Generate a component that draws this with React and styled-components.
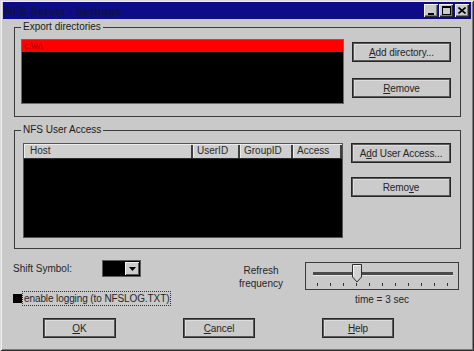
import React from "react";
import styled, { createGlobalStyle } from "styled-components";

const GlobalStyle = createGlobalStyle`
  html, body {
    margin: 0;
    padding: 0;
    background: #c9c9c9;
  }
  body {
    font-family: "Liberation Sans", Arial, sans-serif;
    font-size: 10px;
    color: #1b1b1b;
  }
`;

const Window = styled.div`
  width: 474px;
  height: 351px;
  box-sizing: border-box;
  padding: 2px 3px 0 3px;
  background: #c9c9c9;
  display: flex;
  flex-direction: column;
  box-shadow: inset 1px 1px #dcdcdc, inset -1px -1px #2e2e2e,
    inset 2px 2px #efefef, inset -2px -2px #7c7c7c;
`;

const TitleBar = styled.div`
  height: 17px;
  flex: none;
  display: flex;
  align-items: center;
  padding: 0 2px 0 2px;
  background: #0c0c86;
`;

const Title = styled.span`
  flex: 1;
  font-size: 11px;
  font-weight: bold;
  color: #121240;
  letter-spacing: 0.2px;
`;

const TitleButton = styled.div`
  width: 14px;
  height: 13px;
  box-sizing: border-box;
  margin-left: ${(p) => p.$gap || 0}px;
  background: #cacaca;
  box-shadow: inset 1px 1px #f4f4f4, inset -1px -1px #2a2a2a,
    inset -2px -2px #7c7c7c;
  display: flex;
  align-items: center;
  justify-content: center;
`;

const Body = styled.div`
  display: flex;
  flex-direction: column;
  padding: 2px 10px 0 11px;
`;

const Group = styled.fieldset`
  margin: 0;
  margin-top: ${(p) => p.$top || 0}px;
  padding: 0;
  min-width: 0;
  border: 1px solid #3b3b3b;
`;

const Legend = styled.legend`
  margin-left: 6px;
  padding: 0 2px;
  line-height: 12px;
  font-size: 10px;
`;

const GroupInner = styled.div`
  display: flex;
  align-items: flex-start;
  padding: ${(p) => p.$pad};
`;

const ListBox = styled.div`
  width: 323px;
  height: 65px;
  box-sizing: border-box;
  border: 1px solid #6a6a6a;
  background: #000;
`;

const SelectedItem = styled.div`
  height: 12px;
  line-height: 12px;
  padding-left: 2px;
  background: #ff0000;
  color: #9a0000;
  font-size: 9px;
`;

const ButtonColumn = styled.div`
  display: flex;
  flex-direction: column;
  gap: ${(p) => p.$gap}px;
  margin-left: 8px;
  padding-top: ${(p) => p.$top || 0}px;
`;

const Button = styled.button`
  width: ${(p) => p.$w}px;
  height: 20px;
  box-sizing: border-box;
  padding: 0;
  margin: 0;
  font-family: "Liberation Sans", Arial, sans-serif;
  font-size: 10px;
  color: #262626;
  background: #cbcbcb;
  border: 1px solid #262626;
  box-shadow: inset 1px 1px #5a5a5a, inset -1px -1px #5a5a5a,
    inset 2px 2px #dedede;
  letter-spacing: -0.1px;
`;

const Key = styled.span`
  text-decoration: underline;
`;

const Table = styled.div`
  width: 320px;
  height: 95px;
  box-sizing: border-box;
  border: 1px solid #555;
  background: #000;
`;

const HeaderRow = styled.div`
  display: grid;
  grid-template-columns: 169px 47px 53px 1fr;
  height: 14px;
  border-bottom: 1px solid #2a2a2a;
`;

const HeaderCell = styled.div`
  line-height: 13px;
  padding-left: ${(p) => p.$pad || 4}px;
  background: #cfcfcf;
  color: #2a2a2a;
  box-shadow: inset 1px 1px #ececec, inset -2px 0 #3e3e3e;
`;

const Bottom = styled.div`
  display: flex;
  margin-top: 11px;
`;

const LeftColumn = styled.div`
  width: 213px;
  display: flex;
  flex-direction: column;
  margin-left: -1px;
`;

const ShiftRow = styled.div`
  display: flex;
  align-items: center;
  height: 17px;
`;

const FieldLabel = styled.span`
  width: 89px;
  color: #262626;
`;

const Combo = styled.div`
  width: 39px;
  height: 17px;
  box-sizing: border-box;
  border: 1px solid #5c5c5c;
  background: #000;
  display: flex;
  justify-content: flex-end;
  align-items: center;
  padding-right: 1px;
`;

const ComboButton = styled.div`
  width: 14px;
  height: 13px;
  box-sizing: border-box;
  background: #cdcdcd;
  box-shadow: inset 1px 1px #f2f2f2, inset -1px -1px #555;
  display: flex;
  align-items: center;
  justify-content: center;
`;

const CheckRow = styled.div`
  display: flex;
  align-items: center;
  height: 15px;
  margin-top: 14px;
`;

const CheckBox = styled.div`
  width: 9px;
  height: 9px;
  background: #000;
`;

const CheckLabel = styled.span`
  height: 15px;
  box-sizing: border-box;
  line-height: 13px;
  padding: 0 1px 0 1px;
  border: 1px dotted #333;
  color: #262626;
  letter-spacing: -0.1px;
`;

const RightColumn = styled.div`
  width: 234px;
  display: flex;
  align-items: flex-start;
  padding-top: 2px;
`;

const RefreshLabel = styled.div`
  width: 70px;
  margin-top: 2px;
  line-height: 13px;
  text-align: center;
  color: #262626;
`;

const SliderColumn = styled.div`
  width: 154px;
  margin-left: 9px;
  display: flex;
  flex-direction: column;
`;

const SliderBox = styled.div`
  position: relative;
  height: 28px;
  box-sizing: border-box;
  border: 1px solid #3a3a3a;
  padding: 9px 5px 0 7px;
`;

const Track = styled.div`
  height: 3px;
  background: #4a4a4a;
  border-bottom: 1px solid #e6e6e6;
`;

const TickRow = styled.div`
  display: flex;
  justify-content: space-between;
  margin-top: 7px;
  padding: 0 5px 0 4px;
`;

const Tick = styled.div`
  width: 1px;
  height: 3px;
  background: #333;
`;

const Thumb = styled.svg`
  position: absolute;
  left: 46px;
  top: 1px;
`;

const Caption = styled.div`
  margin-top: 3px;
  line-height: 13px;
  text-align: center;
  color: #262626;
`;

const ButtonRow = styled.div`
  display: flex;
  gap: 67px;
  margin-top: 12px;
  padding-left: 29px;
`;

export default function App() {
  const ticks = Array.from({ length: 11 });
  return (
    <>
      <GlobalStyle />
      <Window>
        <TitleBar>
          <Title>NFS Server - Settings</Title>
          <TitleButton>
            <svg width="8" height="8" viewBox="0 0 8 8">
              <rect x="1" y="6" width="6" height="2" fill="#000" />
            </svg>
          </TitleButton>
          <TitleButton $gap={1}>
            <svg width="9" height="9" viewBox="0 0 9 9">
              <rect x="0.5" y="0.5" width="8" height="8" fill="none" stroke="#000" />
              <rect x="0" y="0" width="9" height="2" fill="#000" />
            </svg>
          </TitleButton>
          <TitleButton $gap={2}>
            <svg width="8" height="7" viewBox="0 0 8 7">
              <path d="M0.5 0.5 L7.5 6.5 M7.5 0.5 L0.5 6.5" stroke="#000" strokeWidth="1.6" />
            </svg>
          </TitleButton>
        </TitleBar>
        <Body>
          <Group>
            <Legend>Export directories</Legend>
            <GroupInner $pad="6px 9px 12px 6px">
              <ListBox>
                <SelectedItem>c:\w\</SelectedItem>
              </ListBox>
              <ButtonColumn $top={3} $gap={16}>
                <Button $w={99}>
                  <Key>A</Key>dd directory...
                </Button>
                <Button $w={99}>
                  <Key>R</Key>emove
                </Button>
              </ButtonColumn>
            </GroupInner>
          </Group>
          <Group $top={7}>
            <Legend>NFS User Access</Legend>
            <GroupInner $pad="7px 9px 10px 8px">
              <Table>
                <HeaderRow>
                  <HeaderCell $pad={6}>Host</HeaderCell>
                  <HeaderCell>UserID</HeaderCell>
                  <HeaderCell>GroupID</HeaderCell>
                  <HeaderCell>Access</HeaderCell>
                </HeaderRow>
              </Table>
              <ButtonColumn $gap={14}>
                <Button $w={100}>
                  A<Key>d</Key>d User Access...
                </Button>
                <Button $w={100}>
                  Remo<Key>v</Key>e
                </Button>
              </ButtonColumn>
            </GroupInner>
          </Group>
          <Bottom>
            <LeftColumn>
              <ShiftRow>
                <FieldLabel>Shift Symbol:</FieldLabel>
                <Combo>
                  <ComboButton>
                    <svg width="7" height="4" viewBox="0 0 7 4">
                      <path d="M0 0 H7 L3.5 4 Z" fill="#000" />
                    </svg>
                  </ComboButton>
                </Combo>
              </ShiftRow>
              <CheckRow>
                <CheckBox />
                <CheckLabel>enable logging (to NFSLOG.TXT)</CheckLabel>
              </CheckRow>
            </LeftColumn>
            <RightColumn>
              <RefreshLabel>
                Refresh
                <br />
                frequency
              </RefreshLabel>
              <SliderColumn>
                <SliderBox>
                  <Track />
                  <TickRow>
                    {ticks.map((_, i) => (
                      <Tick key={i} />
                    ))}
                  </TickRow>
                  <Thumb width="11" height="19" viewBox="0 0 11 19">
                    <path d="M0.5 0.5 H9.5 V13 L5 18 L0.5 13 Z" fill="#d2d2d2" stroke="#2e2e2e" />
                    <path d="M1.5 1.5 H8.5 M1.5 1.5 V12.5" stroke="#f4f4f4" fill="none" />
                  </Thumb>
                </SliderBox>
                <Caption>time = 3 sec</Caption>
              </SliderColumn>
            </RightColumn>
          </Bottom>
          <ButtonRow>
            <Button $w={73}>
              <Key>O</Key>K
            </Button>
            <Button $w={72}>
              <Key>C</Key>ancel
            </Button>
            <Button $w={72}>
              <Key>H</Key>elp
            </Button>
          </ButtonRow>
        </Body>
      </Window>
    </>
  );
}
